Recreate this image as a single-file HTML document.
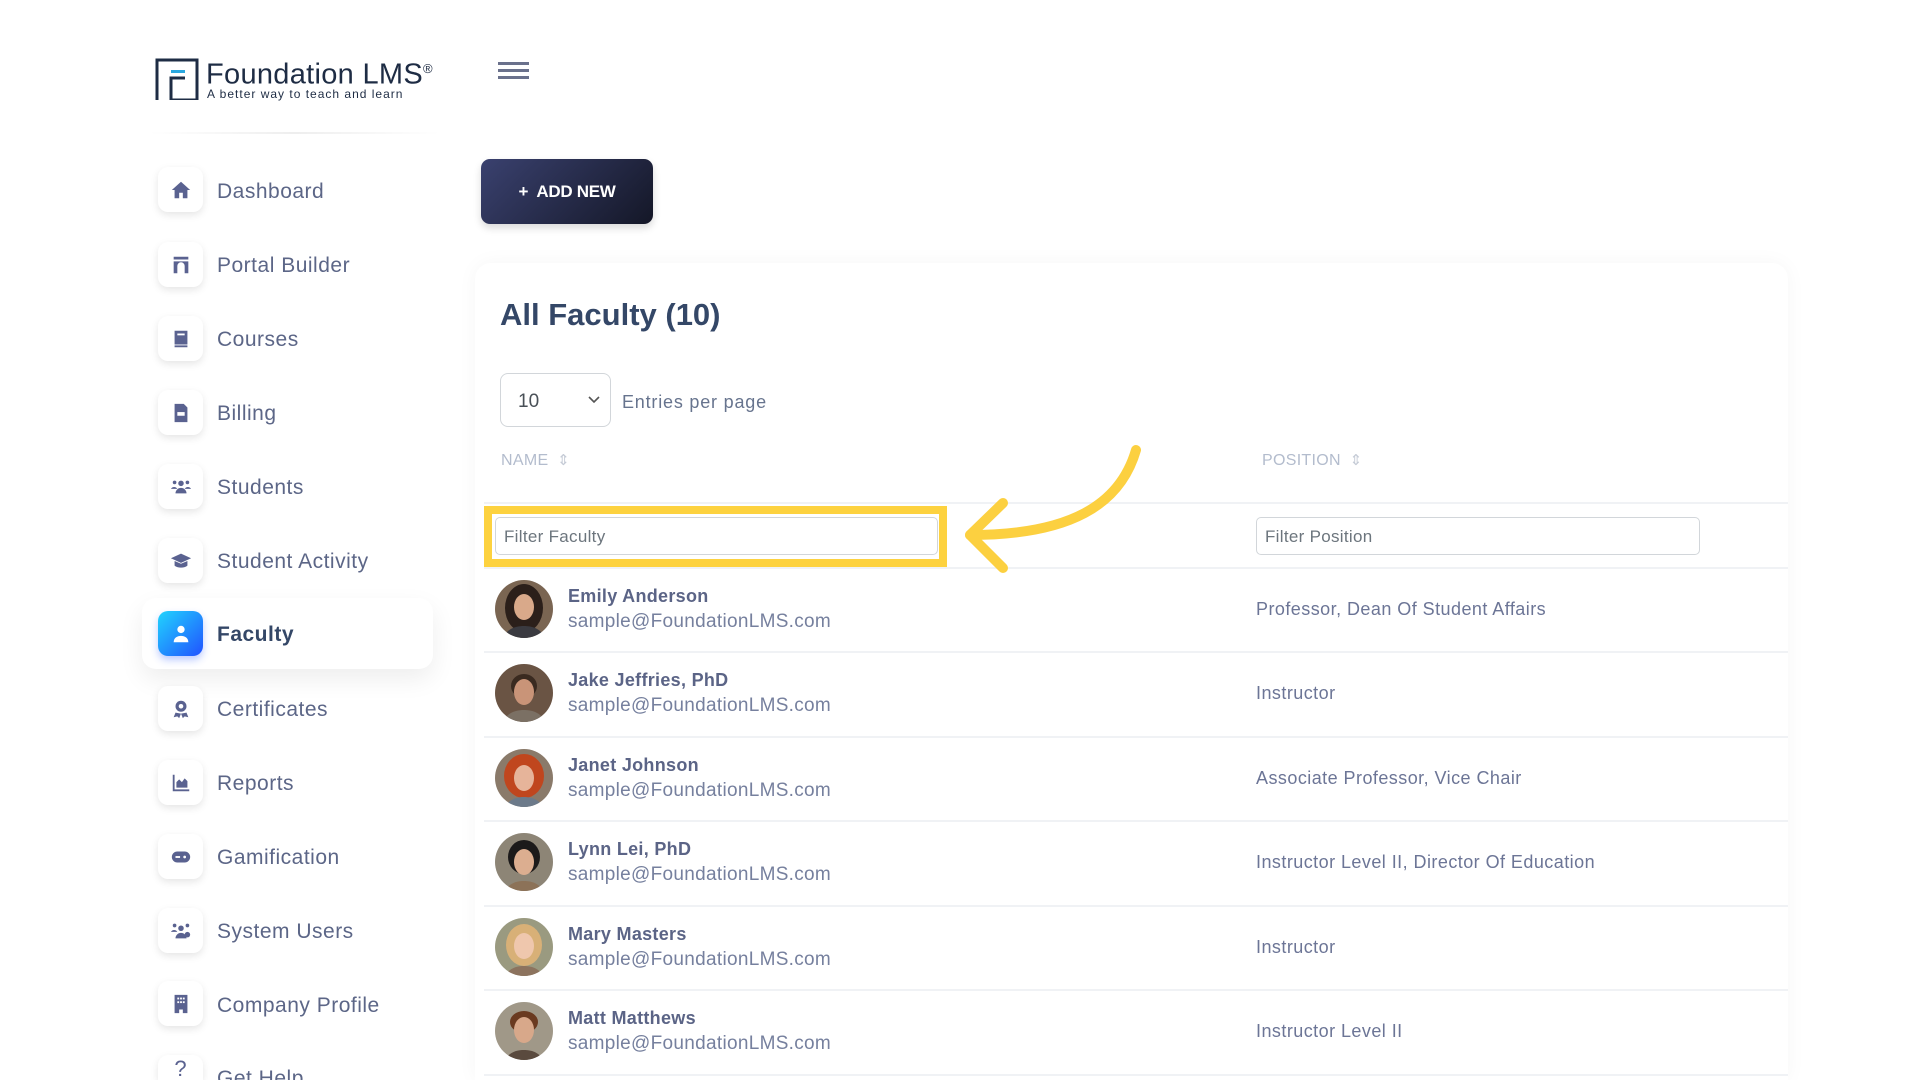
<!DOCTYPE html>
<html style="width:1920px;height:1080px;overflow:hidden"><head><meta charset="utf-8"><style>
*{margin:0;padding:0;box-sizing:border-box}
body{width:1920px;height:1080px;background:#fff;font-family:"Liberation Sans",sans-serif;position:relative;overflow:hidden;color:#344767}
.a{position:absolute}
.ib{position:absolute;left:158px;width:45px;height:45px;border-radius:10px;background:#fff;box-shadow:0 3px 8px rgba(0,0,0,.10);display:flex;align-items:center;justify-content:center}
.ib svg{width:22px;height:22px;fill:#5a6290}
.lab{position:absolute;left:217px;font-size:21px;color:#5c6687;line-height:24px;letter-spacing:.5px;margin-top:1px}
.hr{position:absolute;left:484px;width:1304px;height:2px;background:#f0f2f5}
.nm{position:absolute;left:568px;font-size:18px;font-weight:bold;color:#5b6486;letter-spacing:.3px}
.em{position:absolute;left:568px;font-size:19px;color:#76809e;letter-spacing:.3px}
.ps{position:absolute;left:1256px;font-size:18px;color:#6c7596;letter-spacing:.45px}
.av{position:absolute;left:495px;width:58px;height:58px;border-radius:50%;overflow:hidden}
</style></head><body>
<svg class="a" style="left:155px;top:58px" width="44" height="42" viewBox="0 0 44 42"><path d="M2 42V2h40v40H16V20h14" fill="none" stroke="#1e2c44" stroke-width="3"/><rect x="16" y="12" width="14" height="3" fill="#2aa8e0"/></svg>
<div class="a" style="left:206px;top:53px;font-size:29px;color:#1e2c44;line-height:32px;letter-spacing:.3px">Foundation LMS<sup style="font-size:13px">®</sup></div>
<div class="a" style="left:207px;top:87px;font-size:12px;color:#1e2c44;letter-spacing:1px">A better way to teach and learn</div>
<div class="a" style="left:498px;top:62px;width:31px;height:3px;background:#6a718c;box-shadow:0 7px 0 #6a718c,0 14px 0 #6a718c"></div>
<div class="a" style="left:150px;top:132px;width:290px;height:2px;background:linear-gradient(90deg,#fff,#eee,#fff)"></div>

<div class="a" style="left:142px;top:598px;width:291px;height:71px;border-radius:14px;background:#fff;box-shadow:0 10px 25px rgba(0,0,0,.07)"></div>

<div class="ib" style="top:167px"><svg viewBox="0 0 24 24"><path d="M12 3L2 12h3v9h5v-6h4v6h5v-9h3z"/></svg></div><div class="lab" style="top:179px">Dashboard</div>
<div class="ib" style="top:242px"><svg viewBox="0 0 24 24"><path d="M4 3h16v3H4zM4 8h16v13h-4v-8a4 4 0 0 0-8 0v8H4z"/></svg></div><div class="lab" style="top:253px">Portal Builder</div>
<div class="ib" style="top:316px"><svg viewBox="0 0 24 24"><path d="M5 3h14v15H5zM5 19h14v2H5z"/><rect x="8" y="6" width="8" height="2" fill="#fff"/></svg></div><div class="lab" style="top:327px">Courses</div>
<div class="ib" style="top:390px"><svg viewBox="0 0 24 24"><path d="M5 2h10l4 4v16H5z"/><rect x="8" y="11" width="8" height="4" fill="#fff"/></svg></div><div class="lab" style="top:401px">Billing</div>
<div class="ib" style="top:464px"><svg viewBox="0 0 24 24"><circle cx="12" cy="8" r="3"/><circle cx="5" cy="7" r="2"/><circle cx="19" cy="7" r="2"/><path d="M6 19a6 6 0 0 1 12 0zM1 14a4 4 0 0 1 7 0zM16 14a4 4 0 0 1 7 0z"/></svg></div><div class="lab" style="top:475px">Students</div>
<div class="ib" style="top:538px"><svg viewBox="0 0 24 24"><path d="M12 4L1 9l11 5 11-5zM5 12v5c3 3 11 3 14 0v-5l-7 3z"/></svg></div><div class="lab" style="top:549px">Student Activity</div>
<div class="ib" style="top:611px;background:linear-gradient(135deg,#21d4fd,#2152ff);box-shadow:0 4px 8px rgba(33,82,255,.3)"><svg viewBox="0 0 24 24" style="fill:#fff"><circle cx="12" cy="7" r="4"/><path d="M4 21c0-5 4-7 8-7s8 2 8 7z"/></svg></div><div class="lab" style="top:622px;font-weight:bold;color:#344767">Faculty</div>
<div class="ib" style="top:686px"><svg viewBox="0 0 24 24"><circle cx="12" cy="9" r="6"/><circle cx="12" cy="9" r="2.5" fill="#fff"/><path d="M6 16l-2 5 4-1 2 2 2-5zM18 16l2 5-4-1-2 2-2-5z"/></svg></div><div class="lab" style="top:697px">Certificates</div>
<div class="ib" style="top:760px"><svg viewBox="0 0 24 24"><path d="M3 3h2v16h16v2H3zM7 17v-6l3-3 3 3 3-4 3 3v7z"/></svg></div><div class="lab" style="top:771px">Reports</div>
<div class="ib" style="top:834px"><svg viewBox="0 0 24 24"><rect x="2" y="6" width="20" height="12" rx="6"/><rect x="6" y="11" width="5" height="2" fill="#fff"/><circle cx="16" cy="12" r="1.5" fill="#fff"/></svg></div><div class="lab" style="top:845px">Gamification</div>
<div class="ib" style="top:908px"><svg viewBox="0 0 24 24"><circle cx="12" cy="9" r="3"/><circle cx="5" cy="6" r="2"/><circle cx="19" cy="6" r="2"/><path d="M6 20a6 6 0 0 1 12 0zM1 13a4 4 0 0 1 7 0z"/><circle cx="19" cy="16" r="3"/></svg></div><div class="lab" style="top:919px">System Users</div>
<div class="ib" style="top:981px"><svg viewBox="0 0 24 24"><path d="M5 2h14v20h-5v-4h-4v4H5z"/><g fill="#fff"><rect x="8" y="5" width="2" height="2"/><rect x="11" y="5" width="2" height="2"/><rect x="14" y="5" width="2" height="2"/><rect x="8" y="9" width="2" height="2"/><rect x="11" y="9" width="2" height="2"/><rect x="14" y="9" width="2" height="2"/></g></svg></div><div class="lab" style="top:993px">Company Profile</div>
<div class="ib" style="top:1055px;height:25px;align-items:flex-end;border-radius:10px 10px 0 0"><span style="font-size:22px;color:#5a6290;line-height:22px">?</span></div><div class="lab" style="top:1066px">Get Help</div>

<div class="a" style="left:481px;top:159px;width:172px;height:65px;border-radius:9px;background:linear-gradient(135deg,#3a416f,#141727);box-shadow:0 4px 8px rgba(0,0,0,.15);color:#fff;font-weight:bold;font-size:17px;display:flex;align-items:center;justify-content:center;letter-spacing:-.3px">+&nbsp; ADD NEW</div>

<div class="a" style="left:475px;top:263px;width:1313px;height:817px;border-radius:16px 16px 0 0;background:#fff;box-shadow:0 0 20px rgba(0,0,0,.04)"></div>
<div class="a" style="left:500px;top:297px;font-size:31px;font-weight:bold;color:#344767">All Faculty (10)</div>
<div class="a" style="left:500px;top:373px;width:111px;height:54px;border:1px solid #d2d6da;border-radius:8px;font-size:19px;color:#495057;padding:17px 0 0 17px">10</div>
<svg class="a" style="left:587px;top:395px" width="14" height="10" viewBox="0 0 14 10"><path d="M2 2l5 5 5-5" fill="none" stroke="#555" stroke-width="1.6"/></svg>
<div class="a" style="left:622px;top:392px;font-size:18px;color:#67748e;letter-spacing:.8px">Entries per page</div>

<div class="a" style="left:501px;top:451px;font-size:16px;color:#b3bccd;letter-spacing:.3px">NAME <span style="font-size:15px;color:#c5cbd6;margin-left:4px">&#8661;</span></div>
<div class="a" style="left:1262px;top:451px;font-size:16px;color:#b3bccd;letter-spacing:.3px">POSITION <span style="font-size:15px;color:#c5cbd6;margin-left:4px">&#8661;</span></div>
<div class="hr" style="top:502px"></div>

<div class="a" style="left:484px;top:506px;width:463px;height:61px;border:8px solid #fdd23f"></div>
<div class="a" style="left:495px;top:517px;width:443px;height:38px;border:1px solid #d2d6da;border-radius:5px;font-size:17px;color:#6c757d;padding:9px 8px;letter-spacing:.3px">Filter Faculty</div>
<div class="a" style="left:1256px;top:517px;width:444px;height:38px;border:1px solid #d2d6da;border-radius:5px;font-size:17px;color:#6c757d;padding:9px 8px;letter-spacing:.3px">Filter Position</div>
<div class="hr" style="top:567px"></div>

<svg class="a" style="left:950px;top:440px" width="200" height="140" viewBox="950 440 200 140"><path d="M1136 450C1120 505 1070 535 970 535" fill="none" stroke="#fcd040" stroke-width="10" stroke-linecap="round"/><path d="M1003 503L970 535L1003 568" fill="none" stroke="#fcd040" stroke-width="10" stroke-linecap="round" stroke-linejoin="round"/></svg>

<div class="av" style="top:580px"><svg width="58" height="58"><rect width="58" height="58" fill="#7a6552"/><ellipse cx="29" cy="28" rx="19" ry="24" fill="#2b1f1a"/><ellipse cx="29" cy="27" rx="10" ry="13" fill="#d9a98a"/><path d="M8 58c4-10 14-12 21-12s17 2 21 12z" fill="#3a3a40"/></svg></div>
<div class="nm" style="top:586px">Emily Anderson</div><div class="em" style="top:611px">sample@FoundationLMS.com</div><div class="ps" style="top:599px">Professor, Dean Of Student Affairs</div>
<div class="hr" style="top:651px"></div>

<div class="av" style="top:664px"><svg width="58" height="58"><rect width="58" height="58" fill="#6a5444"/><ellipse cx="29" cy="22" rx="13" ry="12" fill="#3a2a20"/><ellipse cx="29" cy="28" rx="10" ry="13" fill="#c99478"/><path d="M8 58c4-10 14-12 21-12s17 2 21 12z" fill="#7b7064"/></svg></div>
<div class="nm" style="top:670px">Jake Jeffries, PhD</div><div class="em" style="top:695px">sample@FoundationLMS.com</div><div class="ps" style="top:683px">Instructor</div>
<div class="hr" style="top:736px"></div>

<div class="av" style="top:749px"><svg width="58" height="58"><rect width="58" height="58" fill="#8a7a6a"/><ellipse cx="29" cy="27" rx="20" ry="22" fill="#c0461e"/><ellipse cx="29" cy="29" rx="10" ry="13" fill="#e6b49a"/><path d="M10 58c4-8 12-10 19-10s15 2 19 10z" fill="#6c7a8a"/></svg></div>
<div class="nm" style="top:755px">Janet Johnson</div><div class="em" style="top:780px">sample@FoundationLMS.com</div><div class="ps" style="top:768px">Associate Professor, Vice Chair</div>
<div class="hr" style="top:820px"></div>

<div class="av" style="top:833px"><svg width="58" height="58"><rect width="58" height="58" fill="#8d8576"/><ellipse cx="29" cy="24" rx="16" ry="17" fill="#1c1a1a"/><ellipse cx="29" cy="29" rx="10" ry="13" fill="#dcae90"/><path d="M10 58c4-8 12-10 19-10s15 2 19 10z" fill="#8c7258"/></svg></div>
<div class="nm" style="top:839px">Lynn Lei, PhD</div><div class="em" style="top:864px">sample@FoundationLMS.com</div><div class="ps" style="top:852px">Instructor Level II, Director Of Education</div>
<div class="hr" style="top:905px"></div>

<div class="av" style="top:918px"><svg width="58" height="58"><rect width="58" height="58" fill="#9a9a80"/><ellipse cx="29" cy="27" rx="18" ry="21" fill="#d8b077"/><ellipse cx="29" cy="28" rx="10" ry="13" fill="#efc7ad"/><path d="M10 58c4-8 12-10 19-10s15 2 19 10z" fill="#8c735e"/></svg></div>
<div class="nm" style="top:924px">Mary Masters</div><div class="em" style="top:949px">sample@FoundationLMS.com</div><div class="ps" style="top:937px">Instructor</div>
<div class="hr" style="top:989px"></div>

<div class="av" style="top:1002px"><svg width="58" height="58"><rect width="58" height="58" fill="#a09888"/><ellipse cx="29" cy="20" rx="14" ry="11" fill="#6a3a20"/><ellipse cx="29" cy="28" rx="10" ry="13" fill="#d8a88a"/><path d="M10 58c4-8 12-10 19-10s15 2 19 10z" fill="#5a4a3e"/></svg></div>
<div class="nm" style="top:1008px">Matt Matthews</div><div class="em" style="top:1033px">sample@FoundationLMS.com</div><div class="ps" style="top:1021px">Instructor Level II</div>
<div class="hr" style="top:1074px"></div>
</body></html>
